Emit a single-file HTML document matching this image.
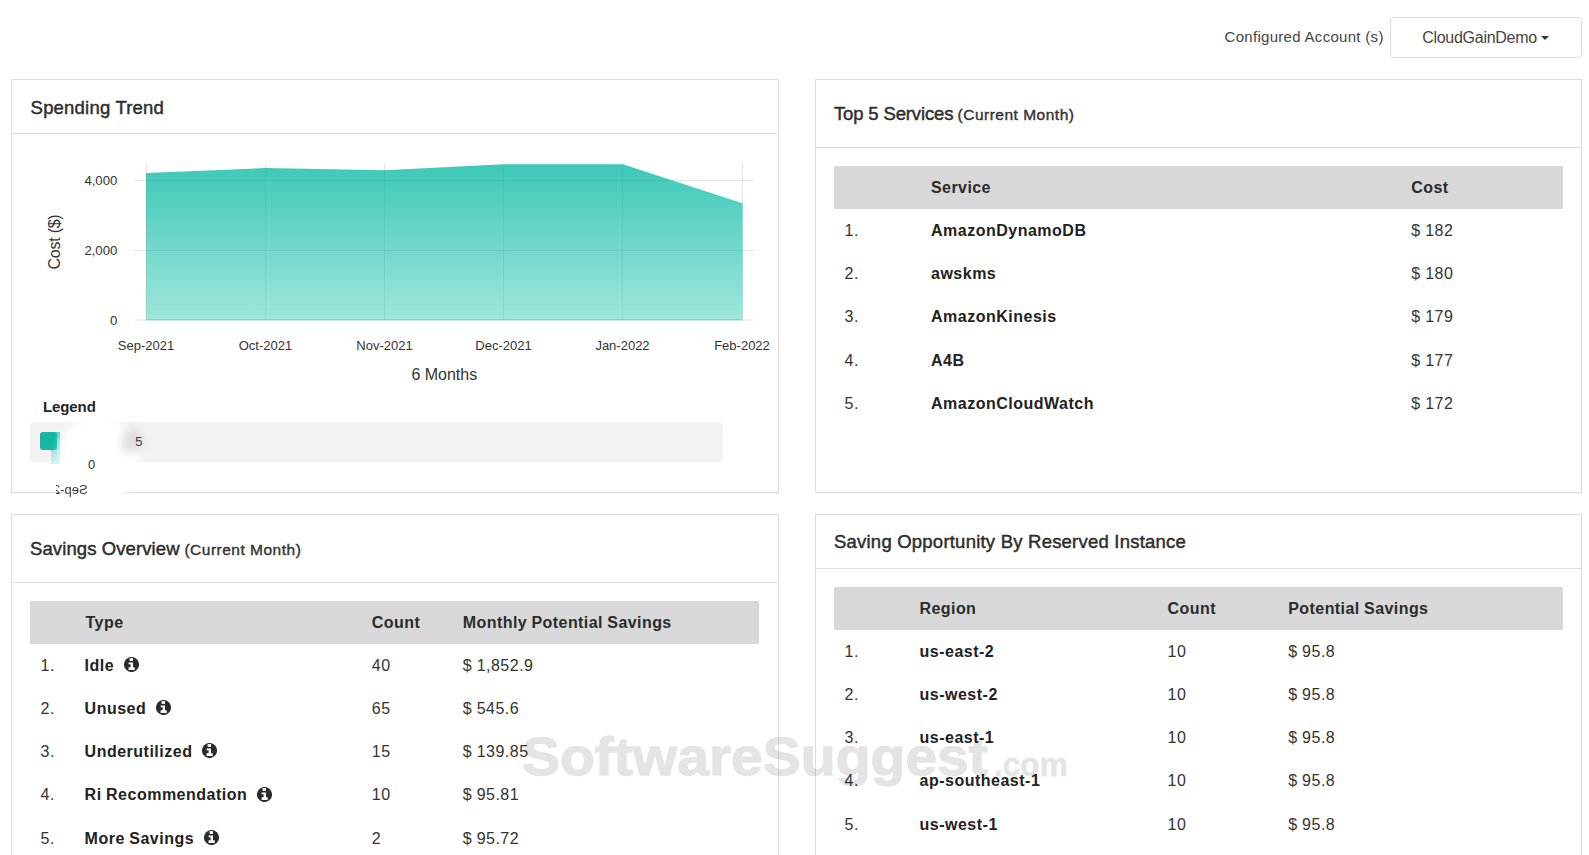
<!DOCTYPE html>
<html lang="en">
<head>
<meta charset="utf-8">
<title>CloudGain Dashboard</title>
<style>
html,body{margin:0;padding:0;background:#fff;}
body{width:1589px;height:855px;overflow:hidden;position:relative;font-family:"Liberation Sans",sans-serif;color:#333;}
.abs{position:absolute;white-space:nowrap;}
.card{position:absolute;border:1px solid #dcdcdc;background:#fff;box-sizing:border-box;box-shadow:0 1px 1px rgba(0,0,0,0.04);}
.hline{position:absolute;height:1px;background:#dedede;}
.title{position:absolute;white-space:nowrap;font-size:18.5px;line-height:24px;color:#2f2f2f;letter-spacing:0.1px;-webkit-text-stroke:0.45px #2a2a2a;}
.title small{font-size:15.5px;font-weight:normal;-webkit-text-stroke:0.4px #333;letter-spacing:0.5px;color:#333;margin-left:-3px;}
table.t{position:absolute;border-collapse:collapse;table-layout:fixed;font-size:16px;line-height:24px;letter-spacing:0.5px;word-spacing:-0.5px;color:#333;}
table.t th,table.t td{padding:9.6px;text-align:left;white-space:nowrap;overflow:visible;}
table.t th{background:#d8d8d8;font-weight:bold;color:#2b2b2b;letter-spacing:0.43px;}
table.t td.b{font-weight:bold;color:#222;}
table.t td:first-child{padding-left:10.5px;}
#tb2 tr:nth-child(5) td{position:relative;top:1px;}
.ic{display:inline-block;width:15px;height:15px;vertical-align:-1.2px;margin-left:5.6px;}
</style>
</head>
<body>

<!-- top bar -->
<div class="abs" id="cfg" style="left:1224.5px;top:26.8px;font-size:15px;line-height:20px;letter-spacing:0.3px;color:#444;">Configured Account (s)</div>
<div class="abs" id="btn" style="left:1390px;top:17px;width:192px;height:41px;box-sizing:border-box;border:1px solid #dcdcdc;border-radius:4px;background:#fff;"></div>
<div class="abs" id="btntxt" style="left:1422.2px;top:28.2px;font-size:16px;line-height:20px;letter-spacing:-0.28px;color:#444;">CloudGainDemo</div>
<div class="abs" style="left:1541px;top:36px;width:0;height:0;border-left:4.5px solid transparent;border-right:4.5px solid transparent;border-top:4.5px solid #333;"></div>

<!-- cards -->
<div class="card" style="left:11px;top:79px;width:768px;height:414px;"></div>
<div class="card" style="left:815px;top:79px;width:767px;height:414px;"></div>
<div class="card" style="left:11px;top:514px;width:768px;height:400px;"></div>
<div class="card" style="left:815px;top:514px;width:767px;height:400px;"></div>

<div class="hline" style="left:12px;top:133px;width:765px;"></div>
<div class="hline" style="left:816px;top:147px;width:765px;"></div>
<div class="hline" style="left:12px;top:582px;width:765px;"></div>
<div class="hline" style="left:816px;top:568px;width:765px;"></div>

<div class="title" id="t1" style="left:30.6px;top:96px;letter-spacing:0.2px;">Spending Trend</div>
<div class="title" id="t2" style="left:834px;top:102px;letter-spacing:-0.15px;">Top 5 Services <small style="margin-left:-0.7px">(Current Month)</small></div>
<div class="title" id="t3" style="left:30px;top:536.5px;">Savings Overview <small style="margin-left:-0.5px">(Current Month)</small></div>
<div class="title" id="t4" style="left:834px;top:530.3px;letter-spacing:0.22px;">Saving Opportunity By Reserved Instance</div>

<!-- CHART -->
<svg class="abs" id="chart" style="left:12px;top:134px;" width="766" height="358" viewBox="12 134 766 358">
  <defs>
    <linearGradient id="ag" x1="0" y1="164" x2="0" y2="320" gradientUnits="userSpaceOnUse">
      <stop offset="0" stop-color="#3ec8b7"/>
      <stop offset="1" stop-color="#9fe6dc"/>
    </linearGradient>
  </defs>
  <g stroke="#e3e3e3" stroke-width="1" shape-rendering="crispEdges">
    <line x1="134" y1="180.5" x2="754" y2="180.5"/>
    <line x1="134" y1="250.5" x2="754" y2="250.5"/>
    <line x1="134" y1="320" x2="754" y2="320" shape-rendering="geometricPrecision"/>
    <line x1="146.5" y1="164" x2="146.5" y2="320"/>
    <line x1="265.5" y1="164" x2="265.5" y2="320"/>
    <line x1="384.5" y1="164" x2="384.5" y2="320"/>
    <line x1="503.5" y1="164" x2="503.5" y2="320"/>
    <line x1="622.5" y1="164" x2="622.5" y2="320"/>
    <line x1="742.5" y1="164" x2="742.5" y2="320"/>
  </g>
  <polygon points="146,172.9 265.2,168 384.4,170.2 503.6,164.2 622.8,164.2 742.5,203.3 742.5,320.4 146,320.4" fill="url(#ag)"/>
  <clipPath id="ac"><polygon points="146,172.9 265.2,168 384.4,170.2 503.6,164.2 622.8,164.2 742.5,203.3 742.5,320.6 146,320.6"/></clipPath>
  <g stroke="rgba(0,70,60,0.075)" stroke-width="1" shape-rendering="crispEdges" clip-path="url(#ac)">
    <line x1="146" y1="180.5" x2="743" y2="180.5"/>
    <line x1="146" y1="250.5" x2="743" y2="250.5"/>
    <line x1="146" y1="319.5" x2="743" y2="319.5" stroke="rgba(0,70,60,0.12)"/>
    <line x1="146.5" y1="164" x2="146.5" y2="320"/>
    <line x1="265.5" y1="164" x2="265.5" y2="320"/>
    <line x1="384.5" y1="164" x2="384.5" y2="320"/>
    <line x1="503.5" y1="164" x2="503.5" y2="320"/>
    <line x1="622.5" y1="164" x2="622.5" y2="320"/>
    <line x1="742" y1="164" x2="742" y2="320"/>
  </g>
  <g font-family="Liberation Sans, sans-serif" font-size="13.2" fill="#333">
    <text x="117.4" y="184.6" text-anchor="end">4,000</text>
    <text x="117.4" y="254.6" text-anchor="end">2,000</text>
    <text x="117.4" y="324.6" text-anchor="end">0</text>
    <text x="146" y="350" text-anchor="middle" font-size="13">Sep-2021</text>
    <text x="265.5" y="350" text-anchor="middle" font-size="13">Oct-2021</text>
    <text x="384.5" y="350" text-anchor="middle" font-size="13">Nov-2021</text>
    <text x="503.5" y="350" text-anchor="middle" font-size="13">Dec-2021</text>
    <text x="622.5" y="350" text-anchor="middle" font-size="13">Jan-2022</text>
    <text x="742" y="350" text-anchor="middle" font-size="13">Feb-2022</text>
  </g>
  <text x="444.3" y="380.2" text-anchor="middle" font-family="Liberation Sans, sans-serif" font-size="16" fill="#333">6 Months</text>
  <text transform="translate(60.3,242) rotate(-90)" text-anchor="middle" font-family="Liberation Sans, sans-serif" font-size="16" letter-spacing="-0.25" fill="#333">Cost ($)</text>
</svg>

<!-- legend -->
<div class="abs" id="lg" style="left:42.9px;top:396.6px;font-size:15px;line-height:20px;font-weight:bold;letter-spacing:-0.08px;color:#222;">Legend</div>
<div class="abs" style="left:30px;top:422px;width:693px;height:40px;background:#f2f2f2;border-radius:4px;"></div>
<div class="abs" style="left:51px;top:432px;width:9px;height:32px;background:linear-gradient(#58d0c1,#d4f2ed);"></div>
<div class="abs" style="left:49px;top:463px;width:23px;height:1px;background:#e4e4e4;"></div>
<div class="abs" style="left:40px;top:432px;width:17px;height:18px;background:#16b7a3;border-radius:3px;"></div>
<div class="abs" style="left:60px;top:416px;width:80px;height:86px;border-radius:40px 46px 44px 30px;background:#fff;filter:blur(4.5px);"></div>
<div class="abs" style="left:78px;top:470px;width:44px;height:30px;background:#fff;filter:blur(3px);"></div>
<div class="abs" style="left:121px;top:429px;width:20px;height:25px;border-radius:10px;background:rgba(110,110,110,0.2);filter:blur(4px);"></div>
<div class="abs" style="left:135.3px;top:434px;font-size:13px;line-height:16px;color:#3a3a3a;">5</div>
<div class="abs" style="left:88px;top:457px;font-size:13px;line-height:16px;color:#333;">0</div>
<div class="abs" style="left:56px;top:482.3px;width:32px;height:17px;overflow:hidden;"><span style="position:absolute;right:0;top:0;display:inline-block;font-size:13px;line-height:16px;transform:scaleX(-1);color:#333;">Sep-2</span></div>

<!-- TABLES -->
<table class="t" id="tb2" style="left:834px;top:166px;width:729px;">
<colgroup><col style="width:87.4px"><col style="width:480.3px"><col></colgroup>
<tr><th></th><th>Service</th><th>Cost</th></tr>
<tr><td>1.</td><td class="b">AmazonDynamoDB</td><td>$ 182</td></tr>
<tr><td>2.</td><td class="b">awskms</td><td>$ 180</td></tr>
<tr><td>3.</td><td class="b">AmazonKinesis</td><td>$ 179</td></tr>
<tr><td>4.</td><td class="b">A4B</td><td>$ 177</td></tr>
<tr><td>5.</td><td class="b">AmazonCloudWatch</td><td>$ 172</td></tr>
</table>

<table class="t" id="tb3" style="left:30px;top:601px;width:729px;">
<colgroup><col style="width:45px"><col style="width:287.2px"><col style="width:91px"><col></colgroup>
<tr><th></th><th style="padding-left:10.6px">Type</th><th>Count</th><th>Monthly Potential Savings</th></tr>
<tr><td>1.</td><td class="b">Idle <svg class="ic" viewBox="0 0 15 15"><use href="#info"/></svg></td><td>40</td><td>$ 1,852.9</td></tr>
<tr><td>2.</td><td class="b">Unused <svg class="ic" viewBox="0 0 15 15"><use href="#info"/></svg></td><td>65</td><td>$ 545.6</td></tr>
<tr><td>3.</td><td class="b">Underutilized <svg class="ic" viewBox="0 0 15 15"><use href="#info"/></svg></td><td>15</td><td>$ 139.85</td></tr>
<tr><td>4.</td><td class="b">Ri Recommendation <svg class="ic" viewBox="0 0 15 15"><use href="#info"/></svg></td><td>10</td><td>$ 95.81</td></tr>
<tr><td>5.</td><td class="b">More Savings <svg class="ic" viewBox="0 0 15 15"><use href="#info"/></svg></td><td>2</td><td>$ 95.72</td></tr>
</table>

<table class="t" id="tb4" style="left:834px;top:587px;width:729px;">
<colgroup><col style="width:75.9px"><col style="width:248.1px"><col style="width:120.7px"><col></colgroup>
<tr><th></th><th>Region</th><th>Count</th><th>Potential Savings</th></tr>
<tr><td>1.</td><td class="b">us-east-2</td><td>10</td><td>$ 95.8</td></tr>
<tr><td>2.</td><td class="b">us-west-2</td><td>10</td><td>$ 95.8</td></tr>
<tr><td>3.</td><td class="b">us-east-1</td><td>10</td><td>$ 95.8</td></tr>
<tr><td>4.</td><td class="b">ap-southeast-1</td><td>10</td><td>$ 95.8</td></tr>
<tr><td>5.</td><td class="b">us-west-1</td><td>10</td><td>$ 95.8</td></tr>
</table>

<!-- icon defs -->
<svg width="0" height="0" style="position:absolute">
  <defs>
    <g id="info">
      <circle cx="7.5" cy="7.5" r="7.55" fill="#2b2b2b"/>
      <rect x="5.6" y="1.1" width="3.4" height="2.8" fill="#fff"/>
      <path d="M4.6 5.4H9V10.2H10.7V13.1H4.6V10.2H6.6V7.3H4.6Z" fill="#fff"/>
    </g>
  </defs>
</svg>

<!-- watermark -->
<div class="abs" id="wm" style="left:521.5px;top:727px;font-size:53px;line-height:60px;font-weight:bold;color:#000;opacity:0.1;-webkit-text-stroke:1.4px #000;transform:scaleX(1.076);transform-origin:0 0;">SoftwareSuggest</div>
<div class="abs" id="wm2" style="left:993.5px;top:743.5px;font-size:34px;line-height:40px;font-weight:bold;color:#000;opacity:0.1;-webkit-text-stroke:0.8px #000;transform:scaleX(0.93);transform-origin:0 0;">.com</div>

</body>
</html>
